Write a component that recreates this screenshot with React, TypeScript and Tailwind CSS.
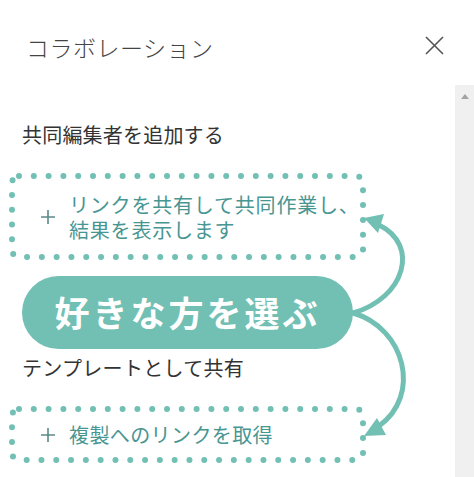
import React from "react";

const TEAL = "#72c0b4";

function DottedFrame({ w, h }: { w: number; h: number }) {
  return (
    <svg className="pointer-events-none absolute inset-0" width={w} height={h}>
      <rect x={3} y={3} width={w - 6} height={h - 6} rx={7} fill="none" stroke={TEAL} strokeWidth={6} strokeLinecap="round" strokeDasharray="0 14.8" />
    </svg>
  );
}

function Plus() {
  return (
    <svg width="16" height="16" viewBox="0 0 16 16" className="shrink-0">
      <path d="M8 1v14M1 8h14" stroke="#5b8a87" strokeWidth="1.6" />
    </svg>
  );
}

export default function App() {
  return (
    <div
      className="relative h-[477px] w-[474px] overflow-hidden bg-white"
      style={{ fontFamily: '"Noto Sans CJK JP", "Noto Sans", sans-serif' }}
    >
      <header className="flex h-[85px] items-start justify-between pl-[26px] pr-[30px] pt-[31px]">
        <h1 className="text-[23px] font-light leading-[32px] tracking-[0.5px] text-[#444]">コラボレーション</h1>
        <button aria-label="閉じる" className="mt-[5px]">
          <svg width="19" height="19" viewBox="0 0 19 19">
            <path d="M1 1l17 17M18 1L1 18" stroke="#555" strokeWidth="1.6" />
          </svg>
        </button>
      </header>

      <div className="flex h-[392px]">
        <main className="flex-1">
          <p className="ml-[22px] mt-[38px] h-[24px] text-[20px] leading-[24px] tracking-[0.2px] text-[#333]">共同編集者を追加する</p>

          <div className="relative ml-[9px] mt-[26px] flex h-[87px] w-[357px] items-center gap-[13px] pl-[31px]">
            <DottedFrame w={357} h={87} />
            <Plus />
            <div className="text-[20px] leading-[25px] tracking-[0.8px] text-[#479692]">
              <p>リンクを共有して共同作業し、</p>
              <p>結果を表示します</p>
            </div>
          </div>

          <div className="ml-[22px] mt-[16px] flex h-[73px] w-[331px] items-center justify-center rounded-full bg-[#72c0b4]">
            <span className="text-[35px] font-bold tracking-[3px] text-white">好きな方を選ぶ</span>
          </div>

          <p className="ml-[22px] mt-[7px] h-[24px] text-[20px] leading-[24px] tracking-[0.3px] text-[#333]">テンプレートとして共有</p>

          <div className="relative ml-[9px] mt-[26px] flex h-[57px] w-[357px] items-center gap-[13px] pl-[31px]">
            <DottedFrame w={357} h={57} />
            <Plus />
            <p className="text-[20px] leading-[25px] tracking-[0.4px] text-[#479692]">複製へのリンクを取得</p>
          </div>
        </main>

        <aside className="flex w-[19px] justify-center bg-[#f0f0f0] pt-[9px]">
          <svg width="8" height="5" viewBox="0 0 8 5">
            <path d="M0 5L4 0L8 5Z" fill="#a3a3a3" />
          </svg>
        </aside>
      </div>

      <svg className="pointer-events-none absolute left-0 top-0" width="474" height="477">
        <g fill="none" stroke={TEAL} strokeWidth="5" strokeLinecap="round">
          <path d="M353 313 C405 298, 420 245, 379 225" />
          <path d="M353 313 C405 328, 422 395, 379 426" />
        </g>
        <g fill={TEAL}>
          <path d="M364 218 L384 214 L378 233 Z" />
          <path d="M364 436 L377 418 L386 435 Z" />
        </g>
      </svg>
    </div>
  );
}
